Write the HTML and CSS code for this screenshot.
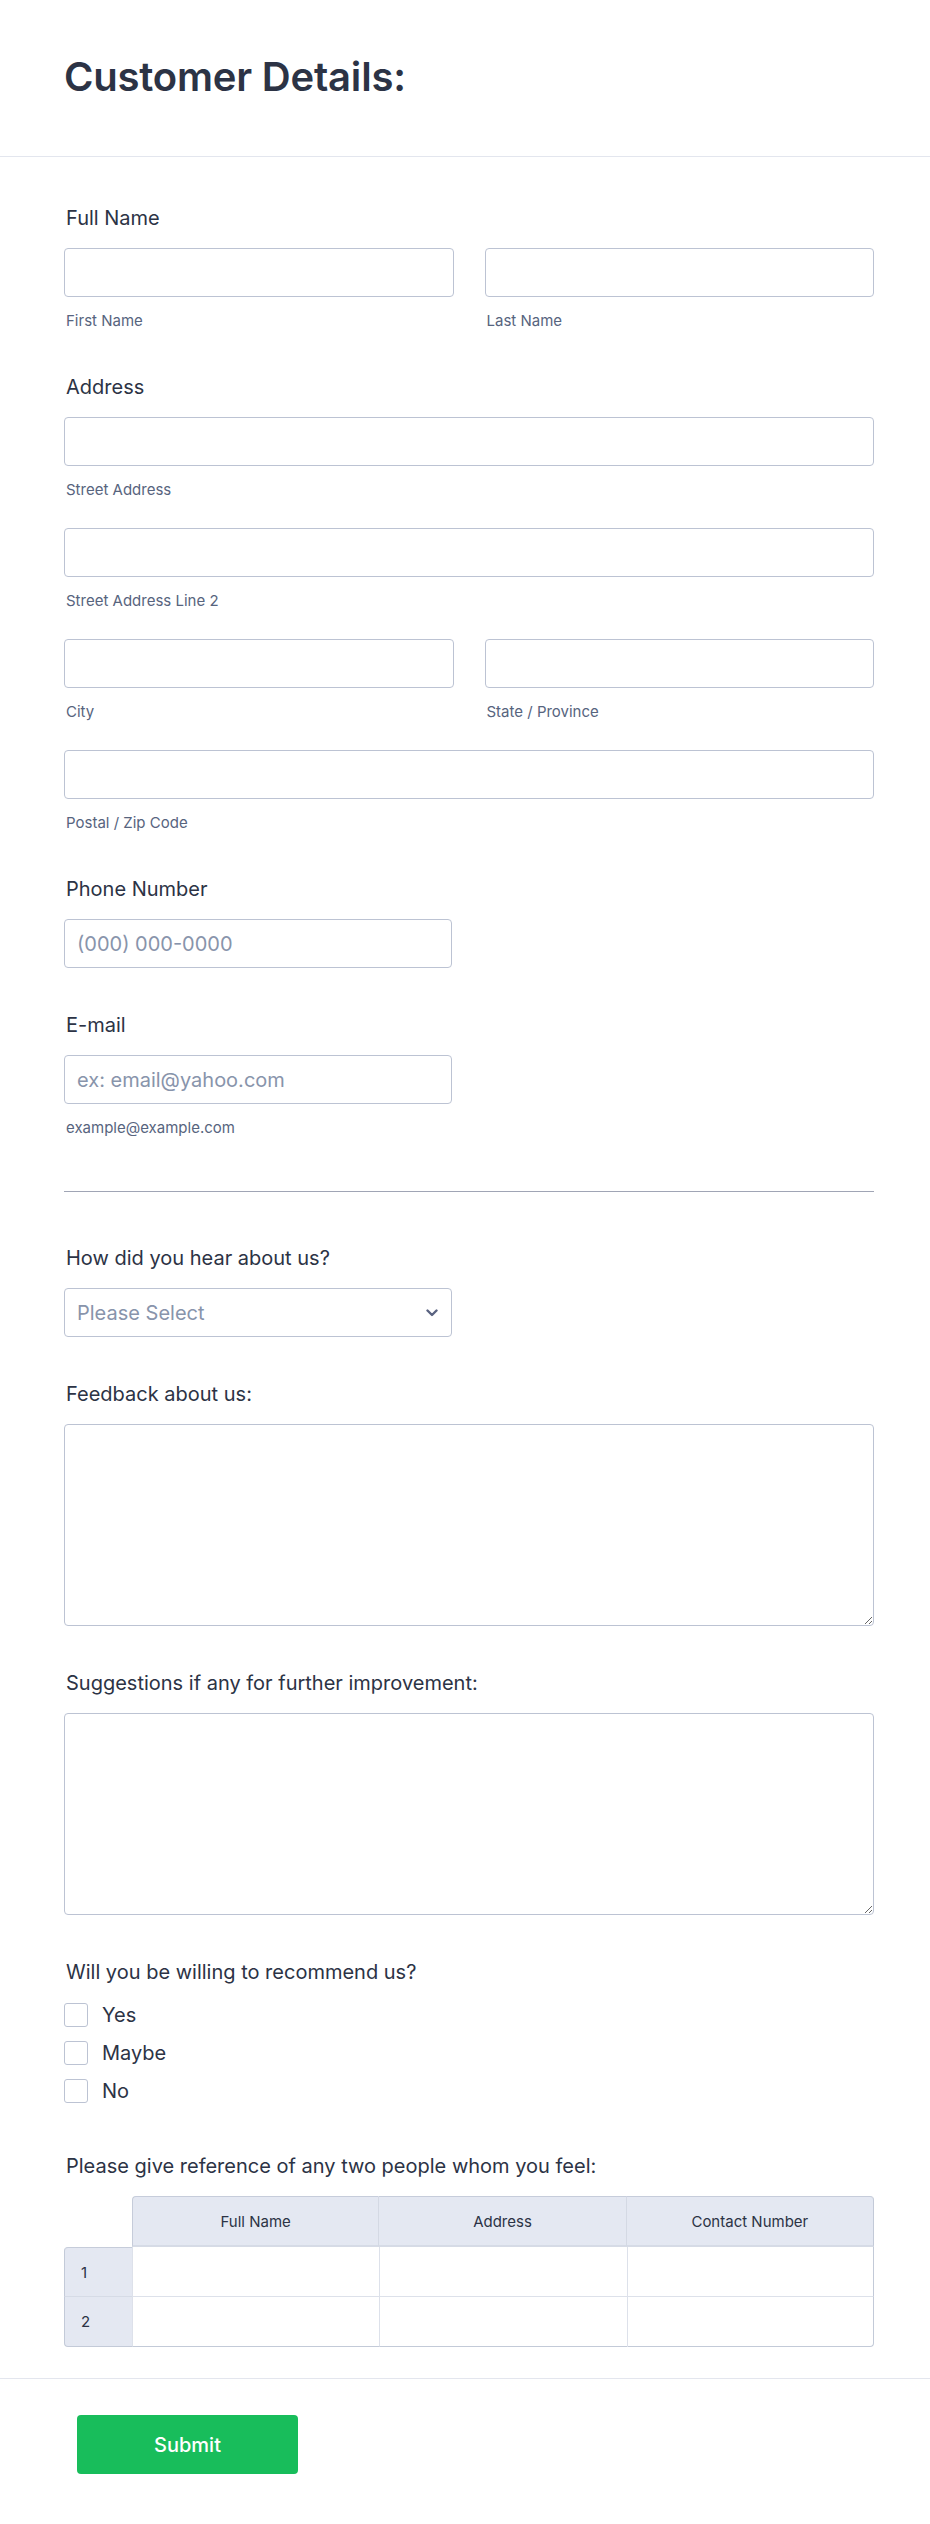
FILE: index.html
```html
<!DOCTYPE html>
<html lang="en">
<head>
<meta charset="utf-8">
<title>Customer Details</title>
<link rel="stylesheet" href="styles.css">
</head>
<body>
<header class="header">
  <h1 class="title">Customer Details:</h1>
</header>
<form class="form">
  <div class="field">
    <label class="label">Full Name</label>
    <div class="row">
      <div><input class="input" type="text"><div class="sub">First Name</div></div>
      <div><input class="input" type="text"><div class="sub">Last Name</div></div>
    </div>
  </div>

  <div class="field">
    <label class="label">Address</label>
    <div class="group"><input class="input" type="text"><div class="sub">Street Address</div></div>
    <div class="group"><input class="input" type="text"><div class="sub">Street Address Line 2</div></div>
    <div class="group row">
      <div><input class="input" type="text"><div class="sub">City</div></div>
      <div><input class="input" type="text"><div class="sub">State / Province</div></div>
    </div>
    <div class="group"><input class="input" type="text"><div class="sub">Postal / Zip Code</div></div>
  </div>

  <div class="field">
    <label class="label">Phone Number</label>
    <input class="input half" type="text" placeholder="(000) 000-0000">
  </div>

  <div class="field">
    <label class="label">E-mail</label>
    <input class="input half" type="text" placeholder="ex: email@yahoo.com">
    <div class="sub">example@example.com</div>
  </div>

  <hr class="divider">

  <div class="field after-divider">
    <label class="label">How did you hear about us?</label>
    <div class="select half">
      <span>Please Select</span>
      <svg class="chev" width="12" height="8" viewBox="0 0 12 8"><polyline points="1.5,1.5 6,6 10.5,1.5" fill="none" stroke="#5a6381" stroke-width="2.4" stroke-linecap="round" stroke-linejoin="round"/></svg>
    </div>
  </div>

  <div class="field">
    <label class="label">Feedback about us:</label>
    <textarea class="textarea"></textarea>
  </div>

  <div class="field">
    <label class="label">Suggestions if any for further improvement:</label>
    <textarea class="textarea"></textarea>
  </div>

  <div class="field">
    <label class="label label-checks">Will you be willing to recommend us?</label>
    <div class="checks">
      <div class="check"><span class="box"></span><span>Yes</span></div>
      <div class="check"><span class="box"></span><span>Maybe</span></div>
      <div class="check"><span class="box"></span><span>No</span></div>
    </div>
  </div>

  <div class="field field-table">
    <label class="label">Please give reference of any two people whom you feel:</label>
    <table class="matrix">
      <thead>
        <tr>
          <th class="corner"></th>
          <th class="col first-col">Full Name</th>
          <th class="col">Address</th>
          <th class="col last-col">Contact Number</th>
        </tr>
      </thead>
      <tbody>
        <tr>
          <th class="rowhead first-row">1</th>
          <td></td><td></td><td class="last-col"></td>
        </tr>
        <tr>
          <th class="rowhead last-row">2</th>
          <td></td><td></td><td class="last-col last-cell"></td>
        </tr>
      </tbody>
    </table>
  </div>
</form>
<footer class="footer">
  <button class="submit" type="button">Submit</button>
</footer>
</body>
</html>
```
FILE: styles.css
```css
* { box-sizing: border-box; }

body {
  margin: 0;
  background: #ffffff;
  color: #2c3345;
  font-family: Inter, "Noto Sans", sans-serif;
}

.header {
  padding: 53px 56px 55px 64px;
  border-bottom: 1px solid #e3e6ee;
}

.title {
  margin: 0;
  font-size: 40px;
  line-height: 48px;
  font-weight: 600;
  letter-spacing: -0.2px;
  color: #2c3345;
}

.form {
  padding: 49px 56px 31px 64px;
}

.field + .field { margin-top: 45px; }

.label {
  display: block;
  font-size: 20px;
  line-height: 25px;
  font-weight: 400;
  margin-bottom: 17px;
  padding-left: 2px;
  color: #2c3345;
}

.row {
  display: grid;
  grid-template-columns: 1fr 1fr;
  column-gap: 31px;
}

.group + .group { margin-top: 29px; }

.input {
  display: block;
  width: 100%;
  height: 49px;
  margin: 0;
  padding: 0 12px;
  border: 1px solid #bcc3d3;
  border-radius: 4px;
  background: #fff;
  font-family: Inter, sans-serif;
  font-size: 20px;
  color: #2c3345;
  outline: none;
}

.input::placeholder { color: #8894ab; }

.half { width: 388px; }

.sub {
  margin-top: 14px;
  font-size: 15px;
  line-height: 19px;
  color: #57647e;
  padding-left: 2px;
}

.divider {
  margin: 54px 0 0 0;
  border: 0;
  height: 1px;
  background: #a0a5b5;
}

.after-divider { margin-top: 54px; }

.select {
  height: 49px;
  border: 1px solid #bcc3d3;
  border-radius: 4px;
  background: #fff;
  display: flex;
  align-items: center;
  justify-content: space-between;
  padding: 0 13px 0 12px;
  font-size: 20px;
  color: #8894ab;
}

.chev { display: block; }

.textarea {
  display: block;
  width: 100%;
  height: 202px;
  margin: 0;
  border: 1px solid #bcc3d3;
  border-radius: 4px;
  background: #fff;
  font-family: Inter, sans-serif;
  font-size: 20px;
  padding: 10px 12px;
  outline: none;
}

.label-checks { margin-bottom: 18px; }

.checks {
  display: flex;
  flex-direction: column;
  gap: 14px;
}

.check {
  display: flex;
  align-items: center;
  gap: 14px;
  height: 24px;
  font-size: 20px;
  line-height: 24px;
  color: #2c3345;
}

.box {
  width: 24px;
  height: 24px;
  border: 1px solid #bcc3d3;
  border-radius: 3px;
  background: #fff;
  flex: none;
}

.field-table { margin-top: 51px !important; }

.matrix {
  width: 100%;
  border-collapse: separate;
  border-spacing: 0;
  table-layout: fixed;
  font-size: 15px;
  color: #2c3345;
}

.matrix .corner {
  width: 68px;
  background: transparent;
  border: 0;
}

.matrix .col {
  height: 51px;
  background: #e4e8f2;
  font-weight: 400;
  text-align: center;
  border-top: 1px solid #c6ccda;
  border-right: 1px solid #d4d9e4;
  border-bottom: 2px solid #d6dbe6;
}

.matrix .first-col {
  border-left: 1px solid #c6ccda;
  border-top-left-radius: 4px;
}

.matrix .last-col { border-right: 1px solid #c3cad8; }
.matrix .col.last-col { border-top-right-radius: 4px; }

.matrix .rowhead {
  height: 50px;
  background: #e4e8f2;
  font-weight: 400;
  text-align: left;
  padding-left: 16px;
  border-left: 1px solid #c3cad8;
  border-bottom: 1px solid #d6dbe6;
}

.matrix .first-row {
  border-top: 1px solid #c6ccda;
  border-top-left-radius: 4px;
}

.matrix .last-row {
  border-bottom: 1px solid #c3cad8;
  border-bottom-left-radius: 4px;
}

.matrix td {
  height: 50px;
  background: #fff;
  border-left: 1px solid #dde1ea;
  border-bottom: 1px solid #dde1ea;
}

.matrix tbody tr:last-child td { border-bottom: 1px solid #c3cad8; }
.matrix .last-cell { border-bottom-right-radius: 4px; }

.footer {
  border-top: 1px solid #e3e6ee;
  padding: 36px 56px 50px 77px;
}

.submit {
  display: block;
  width: 221px;
  height: 59px;
  border: 0;
  border-radius: 4px;
  background: #18bd5b;
  color: #ffffff;
  font-family: Inter, sans-serif;
  font-size: 20px;
  font-weight: 500;
  cursor: pointer;
}
```
